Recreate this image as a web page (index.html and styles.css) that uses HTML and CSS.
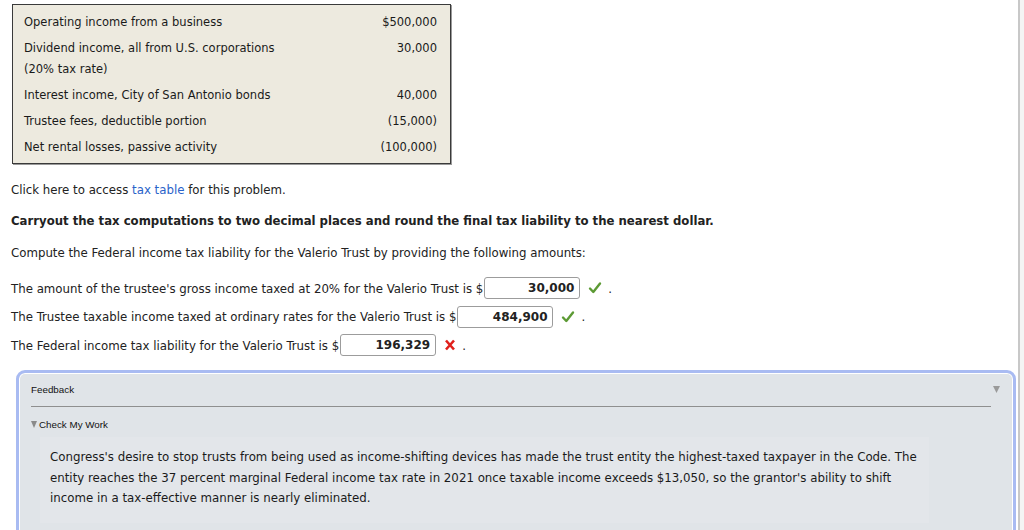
FILE: index.html
```html
<!DOCTYPE html>
<html>
<head>
<meta charset="utf-8">
<link rel="stylesheet" href="styles.css">
</head>
<body>
<div class="page">
  <main class="content">
    <div class="data">
      <div class="cell">Operating income from a business</div><div class="cell num">$500,000</div>
      <div class="cell">Dividend income, all from U.S. corporations<br>(20% tax rate)</div><div class="cell num">30,000</div>
      <div class="cell">Interest income, City of San Antonio bonds</div><div class="cell num">40,000</div>
      <div class="cell">Trustee fees, deductible portion</div><div class="cell num">(15,000)</div>
      <div class="cell">Net rental losses, passive activity</div><div class="cell num">(100,000)</div>
    </div>

    <p class="line first">Click here to access <a class="link">tax table</a> for this problem.</p>
    <p class="line bold">Carryout the tax computations to two decimal places and round the final tax liability to the nearest dollar.</p>
    <p class="line third">Compute the Federal income tax liability for the Valerio Trust by providing the following amounts:</p>

    <div class="answers">
      <div class="answer">
        <span>The amount of the trustee's gross income taxed at 20% for the Valerio Trust is $</span>
        <span class="input">30,000</span>
        <svg class="mark" width="14" height="14" viewBox="0 0 14 14"><path d="M2 7.5 L5.3 11 L12 2.5" fill="none" stroke="#5c9a34" stroke-width="2.4" stroke-linecap="round" stroke-linejoin="round"/></svg>
        <span class="dot">.</span>
      </div>
      <div class="answer">
        <span>The Trustee taxable income taxed at ordinary rates for the Valerio Trust is $</span>
        <span class="input">484,900</span>
        <svg class="mark" width="14" height="14" viewBox="0 0 14 14"><path d="M2 7.5 L5.3 11 L12 2.5" fill="none" stroke="#5c9a34" stroke-width="2.4" stroke-linecap="round" stroke-linejoin="round"/></svg>
        <span class="dot">.</span>
      </div>
      <div class="answer">
        <span>The Federal income tax liability for the Valerio Trust is $</span>
        <span class="input">196,329</span>
        <svg class="mark" width="12" height="12" viewBox="0 0 12 12"><path d="M2 1.5 L10 10.5 M10 1.5 L2 10.5" fill="none" stroke="#e0201c" stroke-width="2.6"/></svg>
        <span class="dot">.</span>
      </div>
    </div>

    <section class="feedback">
      <div class="fb-head">
        <span>Feedback</span>
        <svg width="7" height="7" viewBox="0 0 7 7"><path d="M0 0 H7 L3.5 7 Z" fill="#9a9a9a"/></svg>
      </div>
      <div class="fb-rule"></div>
      <div class="fb-check">
        <svg width="6" height="7" viewBox="0 0 6 7"><path d="M0 0 H6 L3 7 Z" fill="#8a8a8a"/></svg>
        <span>Check My Work</span>
      </div>
      <div class="fb-text">Congress's desire to stop trusts from being used as income-shifting devices has made the trust entity the highest-taxed taxpayer in the Code. The entity reaches the 37 percent marginal Federal income tax rate in 2021 once taxable income exceeds $13,050, so the grantor's ability to shift income in a tax-effective manner is nearly eliminated.</div>
    </section>
  </main>
  <div class="scrollbar"></div>
</div>
</body>
</html>
```

FILE: styles.css
```css
html, body {
  margin: 0;
  padding: 0;
  background: #ffffff;
}

.page {
  display: flex;
  height: 530px;
  overflow: hidden;
}

.content {
  flex: 1;
  padding: 4px 0 0 0;
  font-family: "DejaVu Sans Condensed", "DejaVu Sans", sans-serif;
  font-size: 13.1px;
  color: #222;
}

.scrollbar {
  width: 4px;
  flex: none;
  border-left: 2px solid #c8c8c8;
  background: #f4f4f4;
}

.data {
  margin-left: 12px;
  width: 439px;
  box-sizing: border-box;
  display: grid;
  grid-template-columns: 1fr auto;
  padding: 4px 13px 3px 11px;
  border: 1px solid #3a3a3a;
  box-shadow: 1px 1px 0 #9a9a9a;
  background: #edeadf;
  font-family: "DejaVu Sans", sans-serif;
  font-size: 11.5px;
  color: #1a1a1a;
}

.cell {
  padding: 2.5px 0;
  line-height: 21px;
}

.num {
  text-align: right;
}

.line {
  margin: 0 0 0 11px;
  line-height: 16px;
  padding-top: 15px;
}

.line.first {
  padding-top: 18px;
}

.line.third {
  padding-top: 16px;
}

.bold {
  font-weight: bold;
  font-size: 13px;
}

.link {
  color: #2a62c9;
}

.answers {
  margin-top: 15px;
  margin-left: 11px;
  display: flex;
  flex-direction: column;
  gap: 4.5px;
}

.answer {
  display: flex;
  align-items: center;
  height: 24px;
  white-space: nowrap;
}

.input {
  box-sizing: border-box;
  width: 96px;
  height: 22px;
  margin-left: 1px;
  padding: 0 5px;
  border: 1px solid #9c9c9c;
  border-radius: 3px;
  background: #fff;
  text-align: right;
  font-family: "DejaVu Sans", sans-serif;
  font-weight: bold;
  font-size: 12px;
  line-height: 20px;
  color: #222;
}

.mark {
  margin-left: 8px;
}

.dot {
  margin-left: 6px;
}

.feedback {
  margin: 13px 2px 0 16px;
  height: 200px;
  border: 3px solid #a9bbf2;
  border-radius: 9px;
  box-shadow: inset 0 0 0 1px #ffffff;
  background: #e0e4e8;
  padding: 0 12px 0 12px;
  font-family: "Liberation Sans", Arial, sans-serif;
  font-size: 9.8px;
  color: #111;
}

.fb-head {
  display: flex;
  justify-content: space-between;
  align-items: center;
  padding: 7px 1px 0 0;
  height: 18px;
}

.fb-rule {
  margin-top: 8px;
  margin-right: 10px;
  border-top: 1px solid #8f8f8f;
}

.fb-check {
  display: flex;
  align-items: center;
  gap: 2px;
  margin-top: 11px;
  height: 12px;
}

.fb-text {
  margin: 7px 72px 0 9px;
  padding: 10px 10px 14px 10px;
  background: #e3e6ea;
  font-family: "DejaVu Sans", sans-serif;
  font-size: 11.8px;
  line-height: 20.5px;
  color: #1a1a1a;
}
```
